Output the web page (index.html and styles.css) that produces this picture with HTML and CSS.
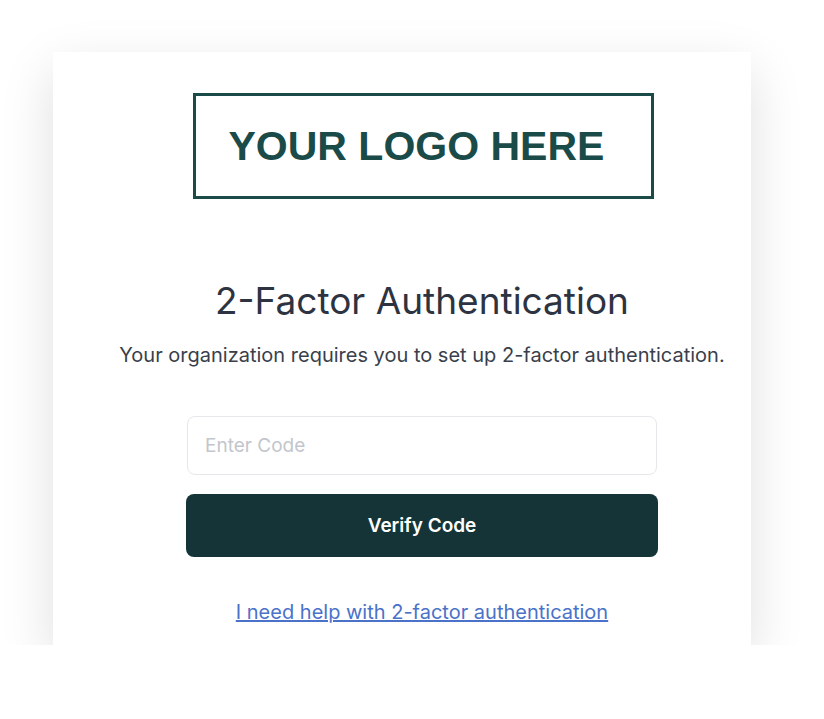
FILE: index.html
```html
<!DOCTYPE html>
<html>
<head>
<meta charset="utf-8">
<link rel="stylesheet" href="styles.css">
</head>
<body>
<div class="card">
  <div class="logo"><span class="logo-text">YOUR LOGO HERE</span></div>
  <h1 class="title">2-Factor Authentication</h1>
  <p class="subtitle">Your organization requires you to set up 2-factor authentication.</p>
  <input class="code-input" type="text" placeholder="Enter Code">
  <button class="verify-btn">Verify Code</button>
  <a class="help-link" href="#">I need help with 2-factor authentication</a>
</div>
</body>
</html>
```
FILE: styles.css
```css
html, body {
  margin: 0;
  padding: 0;
  background: #ffffff;
}
body {
  font-family: Inter, "Noto Sans", sans-serif;
  padding-top: 52px;
  padding-left: 53px;
}
.card {
  box-sizing: border-box;
  width: 698px;
  height: 593px;
  background: #ffffff;
  box-shadow: 0 18px 50px rgba(0, 0, 0, 0.13);
  display: flex;
  flex-direction: column;
  align-items: center;
  padding: 41px 0 0 40px;
}
.logo {
  box-sizing: border-box;
  width: 461px;
  height: 106px;
  margin-left: 2px;
  border: 3px solid #1b4b48;
  display: flex;
  align-items: center;
  padding-left: 33px;
}
.logo-text {
  font-family: "Liberation Sans", Arial, sans-serif;
  font-weight: bold;
  font-size: 41px;
  color: #1b4b48;
}
.title {
  margin: 80px 0 0 0;
  font-size: 37px;
  font-weight: 400;
  color: #2d3341;
  line-height: 44px;
}
.subtitle {
  margin: 19px 0 0 0;
  font-size: 20px;
  color: #3a3f4b;
  line-height: 26px;
}
.code-input {
  box-sizing: border-box;
  margin-top: 48px;
  width: 470px;
  height: 59px;
  border: 1px solid #e6e7ea;
  border-radius: 8px;
  padding: 0 17px;
  font-family: Inter, sans-serif;
  font-size: 19px;
  color: #333;
  outline: none;
}
.code-input::placeholder {
  color: #c3c6cc;
}
.verify-btn {
  box-sizing: border-box;
  margin-top: 19px;
  width: 472px;
  height: 63px;
  border: none;
  border-radius: 8px;
  background: #143438;
  color: #ffffff;
  font-family: Inter, sans-serif;
  font-size: 19px;
  font-weight: 600;
}
.help-link {
  margin-top: 42px;
  font-size: 20px;
  color: #4a72c9;
  text-decoration: underline;
  line-height: 26px;
}
```
